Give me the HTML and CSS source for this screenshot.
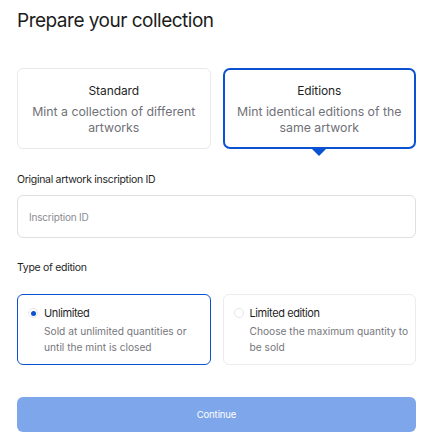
FILE: index.html
```html
<!DOCTYPE html>
<html lang="en">
<head>
<meta charset="utf-8">
<title>Prepare your collection</title>
<link rel="stylesheet" href="styles.css">
</head>
<body>
<main class="page">
  <h1 class="title">Prepare your collection</h1>

  <div class="type-grid">
    <div class="type-card">
      <div class="type-name">Standard</div>
      <div class="type-desc">Mint a collection of different artworks</div>
    </div>
    <div class="type-card selected">
      <div class="type-name">Editions</div>
      <div class="type-desc">Mint identical editions of the same artwork</div>
    </div>
  </div>

  <label class="field-label" for="insc">Original artwork inscription ID</label>
  <input id="insc" class="field-input" type="text" placeholder="Inscription ID">

  <div class="field-label second">Type of edition</div>

  <div class="edition-grid">
    <div class="edition-card selected">
      <span class="radio on"></span>
      <div class="edition-body">
        <div class="edition-name">Unlimited</div>
        <div class="edition-desc">Sold at unlimited quantities or until the mint is closed</div>
      </div>
    </div>
    <div class="edition-card">
      <span class="radio"></span>
      <div class="edition-body">
        <div class="edition-name">Limited edition</div>
        <div class="edition-desc">Choose the maximum quantity to be sold</div>
      </div>
    </div>
  </div>

  <button class="continue" type="button">Continue</button>
</main>
</body>
</html>
```

FILE: styles.css
```css
* { box-sizing: border-box; }
html, body { margin: 0; padding: 0; background: #fff; }
body {
  font-family: Inter, "Noto Sans", "Liberation Sans", sans-serif;
  color: #1f1f1f;
}
.page {
  width: 433px;
  padding: 9px 17px 0 17px;
  display: flex;
  flex-direction: column;
}
.title {
  margin: 0;
  font-size: 19px;
  font-weight: 400;
  letter-spacing: -0.5px;
  line-height: 24px;
  color: #1c1c1c;
}
.type-grid {
  margin-top: 35px;
  display: grid;
  grid-template-columns: 1fr 1fr;
  gap: 12px;
}
.type-card {
  position: relative;
  height: 81px;
  border: 1px solid #e9e9eb;
  border-radius: 6px;
  display: flex;
  flex-direction: column;
  align-items: center;
  padding: 14px 8px 0;
  text-align: center;
}
.type-card.selected {
  border: 2px solid #0b52d2;
  border-radius: 7px;
  padding-top: 13px;
}
.type-card.selected::after {
  content: "";
  position: absolute;
  left: 50%;
  bottom: -9px;
  margin-left: -8px;
  border-left: 8px solid transparent;
  border-right: 8px solid transparent;
  border-top: 8px solid #0b52d2;
}
.type-name {
  font-size: 12px;
  line-height: 16px;
  color: #1f1f1f;
  letter-spacing: -0.1px;
}
.type-desc {
  margin-top: 5px;
  font-size: 12.3px;
  line-height: 16px;
  color: #707178;
  letter-spacing: 0;
}
.field-label {
  margin-top: 24px;
  font-size: 10.5px;
  line-height: 14px;
  letter-spacing: -0.3px;
  color: #1f1f1f;
}
.field-label.second { margin-top: 23px; }
.field-input {
  margin-top: 8px;
  height: 43px;
  width: 100%;
  border: 1px solid #dfdfe3;
  border-radius: 6px;
  padding: 0 11px;
  font-family: inherit;
  font-size: 10px;
  letter-spacing: -0.2px;
  color: #1f1f1f;
  outline: none;
}
.field-input::placeholder { color: #8a8b90; }
.edition-grid {
  margin-top: 19px;
  display: grid;
  grid-template-columns: 1fr 1fr;
  gap: 12px;
}
.edition-card {
  height: 71px;
  border: 1px solid #ececee;
  border-radius: 6px;
  display: flex;
  align-items: flex-start;
  gap: 6px;
  padding: 11px 3px 0 10px;
}
.edition-card.selected {
  border-color: #0b52d2;
}
.radio {
  flex: none;
  width: 10px;
  height: 10px;
  margin-top: 2px;
  border-radius: 50%;
  border: 1px solid #e6e6e8;
  display: flex;
  align-items: center;
  justify-content: center;
}
.radio.on::after {
  content: "";
  width: 5px;
  height: 5px;
  border-radius: 50%;
  background: #0b52d2;
}
.edition-body { display: flex; flex-direction: column; }
.edition-name {
  font-size: 11px;
  line-height: 14px;
  letter-spacing: -0.4px;
  color: #1f1f1f;
}
.edition-desc {
  margin-top: 3px;
  font-size: 10.2px;
  line-height: 16px;
  color: #76777d;
  letter-spacing: 0;
}
.continue {
  margin-top: 32px;
  height: 35px;
  width: 100%;
  border: none;
  border-radius: 6px;
  background: #7ea6ea;
  color: #fff;
  font-family: inherit;
  font-size: 9.5px;
  letter-spacing: -0.1px;
}
```
